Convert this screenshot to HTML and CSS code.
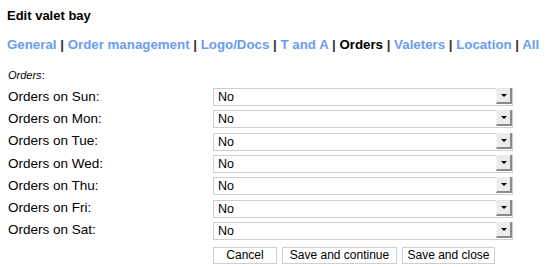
FILE: index.html
```html
<!DOCTYPE html>
<html>
<head>
<meta charset="utf-8">
<link rel="stylesheet" href="styles.css">
</head>
<body>
<h1 class="title">Edit valet bay</h1>
<nav class="tabs">
  <a href="#">General</a> | <a href="#">Order management</a> | <a href="#">Logo/Docs</a> | <a href="#">T and A</a> | <span class="current">Orders</span> | <a href="#">Valeters</a> | <a href="#">Location</a> | <a href="#">All</a>
</nav>
<div class="section"><em>Orders</em>:</div>
<form class="form">
  <div class="row"><label>Orders on Sun:</label><div class="sel"><select><option>No</option></select><span class="arrow"></span></div></div>
  <div class="row"><label>Orders on Mon:</label><div class="sel"><select><option>No</option></select><span class="arrow"></span></div></div>
  <div class="row"><label>Orders on Tue:</label><div class="sel"><select><option>No</option></select><span class="arrow"></span></div></div>
  <div class="row"><label>Orders on Wed:</label><div class="sel"><select><option>No</option></select><span class="arrow"></span></div></div>
  <div class="row"><label>Orders on Thu:</label><div class="sel"><select><option>No</option></select><span class="arrow"></span></div></div>
  <div class="row"><label>Orders on Fri:</label><div class="sel"><select><option>No</option></select><span class="arrow"></span></div></div>
  <div class="row"><label>Orders on Sat:</label><div class="sel"><select><option>No</option></select><span class="arrow"></span></div></div>
  <div class="buttons">
    <button type="button">Cancel</button>
    <button type="button">Save and continue</button>
    <button type="button">Save and close</button>
  </div>
</form>
</body>
</html>
```
FILE: styles.css
```css
body {
  margin: 0;
  padding: 8px 7px;
  font-family: "Liberation Sans", Arial, sans-serif;
  color: #000;
  background: #fff;
}
.title {
  margin: 0;
  font-size: 13px;
  font-weight: bold;
  line-height: 16px;
}
.tabs {
  margin-top: 12px;
  font-size: 13.3px;
  font-weight: bold;
  line-height: 17px;
  color: #333;
  white-space: nowrap;
}
.tabs a {
  color: #6b9cf3;
  text-decoration: none;
}
.tabs .current {
  color: #000;
}
.section {
  margin-top: 16px;
  font-size: 11px;
  line-height: 13px;
  padding-left: 1px;
}
.form {
  margin: 3px 0 0 1px;
}
.row {
  display: flex;
  align-items: center;
  height: 22.3px;
}
.row label {
  width: 205px;
  font-size: 13.5px;
}
.sel {
  position: relative;
  width: 300px;
  height: 18px;
}
.sel select {
  appearance: none;
  -webkit-appearance: none;
  width: 100%;
  height: 18px;
  border: 1px solid #cfcfcf;
  border-radius: 0;
  background: #fff;
  font-family: "Liberation Sans", Arial, sans-serif;
  font-size: 12.5px;
  padding: 0 4px;
  margin: 0;
  color: #000;
}
.arrow {
  position: absolute;
  right: 1px;
  top: 1px;
  width: 13px;
  height: 14px;
  background: #ececec;
  border-right: 2px solid #8a8a8a;
  border-bottom: 2px solid #8a8a8a;
  border-left: 1px solid #f4f4f4;
}
.arrow::after {
  content: "";
  position: absolute;
  left: 4px;
  top: 6px;
  border-left: 3px solid transparent;
  border-right: 3px solid transparent;
  border-top: 3px solid #000;
}
.buttons {
  display: flex;
  gap: 5px;
  margin: 6px 0 0 205px;
}
.buttons button {
  height: 17px;
  padding: 0;
  border: 1px solid #cfcfcf;
  background: #fff;
  font-family: "Liberation Sans", Arial, sans-serif;
  font-size: 12px;
  line-height: 15px;
  color: #000;
  border-radius: 0;
  white-space: nowrap;
  text-align: center;
}
.buttons button:first-child {
  width: 64px;
}
.buttons button:nth-child(2) {
  width: 115px;
}
.buttons button:nth-child(3) {
  width: 93px;
}
```
